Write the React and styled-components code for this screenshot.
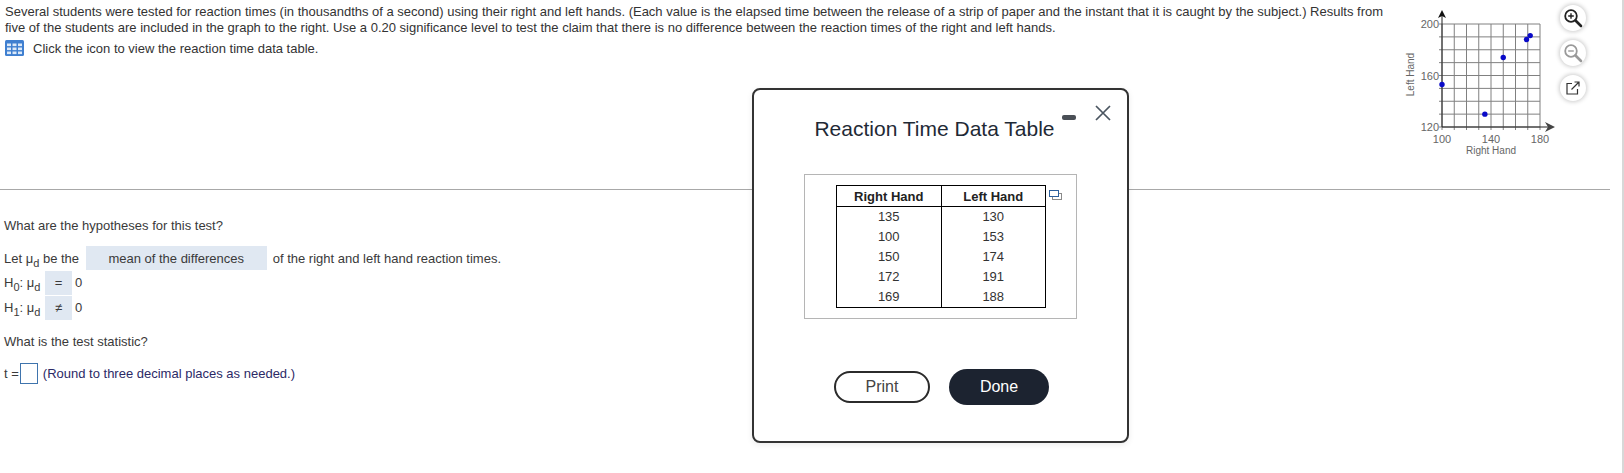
import React from 'react';
import styled, { createGlobalStyle } from 'styled-components';

const GlobalStyle = createGlobalStyle`
  html, body { margin: 0; padding: 0; background: #fff; }
  body { font-family: "Liberation Sans", Arial, sans-serif; color: #333; overflow: hidden; }
`;

const Page = styled.div`
  position: relative;
  width: 1622px;
  height: 473px;
  border-right: 2px solid #d8d8d8;
  font-size: 13px;
`;

const TopSection = styled.section`
  display: flex;
  width: 1610px;
  height: 190px;
  box-sizing: border-box;
  border-bottom: 1px solid #a8a8a8;
`;

const Intro = styled.div`
  width: 1395px;
  padding: 4px 0 0 5px;
  box-sizing: border-box;
  flex: none;
`;

const IntroText = styled.p`
  margin: 0;
  line-height: 16px;
  color: #333;
`;

const DataLink = styled.div`
  display: flex;
  align-items: center;
  gap: 9px;
  margin-top: 3px;
  height: 18px;
`;

const GraphWrap = styled.div`
  width: 160px;
  flex: none;
`;

const Tools = styled.div`
  display: flex;
  flex-direction: column;
  gap: 9px;
  padding-top: 5px;
  margin-left: 5px;
`;

const ToolButton = styled.button`
  width: 26px;
  height: 26px;
  padding: 0;
  border: none;
  border-radius: 50%;
  background: #fff;
  box-shadow: 0 0 4px 1px #ccc;
  display: flex;
  align-items: center;
  justify-content: center;
`;

const Lower = styled.section`
  padding: 27px 0 0 4px;
  color: #3a3a3a;
`;

const Line = styled.div`
  display: flex;
  align-items: center;
  height: ${p => p.$h || 25}px;
  margin-top: ${p => p.$mt || 0}px;
  white-space: pre;
`;

const Sub = styled.sub`
  font-size: 11px;
  line-height: 0;
  vertical-align: -4px;
`;

const Choice = styled.span`
  display: flex;
  align-items: center;
  justify-content: center;
  box-sizing: border-box;
  background: #e0e8f2;
  height: 24px;
  width: ${p => p.$w}px;
  margin: 0 ${p => p.$mr ?? 6}px 0 ${p => p.$ml || 0}px;
`;

const AnswerBox = styled.span`
  display: inline-block;
  box-sizing: border-box;
  width: 18px;
  height: 21px;
  margin: 0 5px 0 1px;
  border: 1px solid #3f74ad;
  background: #fff;
`;

const Note = styled.span`
  color: #2c2a66;
`;

const Modal = styled.div`
  position: absolute;
  left: 752px;
  top: 88px;
  width: 377px;
  height: 355px;
  box-sizing: border-box;
  border: 2.5px solid #333;
  border-radius: 8px;
  background: #fff;
  box-shadow: 0 2px 6px rgba(0, 0, 0, 0.08);
  display: flex;
  flex-direction: column;
  align-items: center;
`;

const ModalHead = styled.div`
  position: relative;
  width: 100%;
  height: 84px;
  flex: none;
`;

const Title = styled.h2`
  margin: 0;
  padding-top: 26px;
  padding-right: 12px;
  text-align: center;
  font-size: 21px;
  line-height: 26px;
  font-weight: 400;
  color: #1f2a36;
`;

const Minimize = styled.span`
  position: absolute;
  left: 308px;
  top: 25px;
  width: 14px;
  height: 5px;
  border-radius: 2px;
  background: #4a4f56;
`;

const Close = styled.svg`
  position: absolute;
  left: 341px;
  top: 15px;
`;

const TableFrame = styled.div`
  position: relative;
  width: 273px;
  height: 145px;
  box-sizing: border-box;
  border: 1px solid #b5b5b5;
  padding: 10px 0 0 31px;
  flex: none;
`;

const DataTable = styled.table`
  border-collapse: collapse;
  width: 210px;
  font-size: 13px;
  text-align: center;
  border: 1.5px solid #000;
  table-layout: fixed;
`;

const Head = styled.th`
  height: 20px;
  padding: 0;
  font-weight: 700;
  color: #222;
  border: 1px solid #000;
`;

const Cell = styled.td`
  height: 18px;
  padding: 0 0 2px;
  color: #333;
  border-left: 1px solid #000;
`;

const CopyIcon = styled.svg`
  position: absolute;
  left: 244px;
  top: 15px;
`;

const Buttons = styled.div`
  display: flex;
  align-items: center;
  gap: 19px;
  margin-top: 50px;
  padding-left: 2px;
`;

const PrintButton = styled.button`
  width: 96px;
  height: 32px;
  box-sizing: border-box;
  border: 2px solid #2b2b2b;
  border-radius: 16px;
  background: #fff;
  color: #444;
  font: 16px "Liberation Sans", Arial, sans-serif;
`;

const DoneButton = styled.button`
  width: 100px;
  height: 36px;
  border: none;
  border-radius: 18px;
  background: #1c2330;
  color: #fff;
  font: 16px "Liberation Sans", Arial, sans-serif;
`;

const rows = [[135, 130], [100, 153], [150, 174], [172, 191], [169, 188]];

const X0 = 47, Y0 = 127, XS = 98 / 80, YS = 103 / 80;
const px = v => X0 + (v - 100) * XS;
const py = v => Y0 - (v - 120) * YS;
const steps = Array.from({ length: 9 }, (_, i) => i * 10);

function Graph() {
  const label = { fontFamily: '"Liberation Sans", Arial, sans-serif', fill: '#666' };
  return (
    <svg width="160" height="170" viewBox="0 0 160 170" style={{ display: 'block' }}>
      {steps.map(s => (
        <g key={s} stroke="#808080" strokeWidth="1">
          <line x1={px(100 + s)} x2={px(100 + s)} y1={py(200)} y2={py(120) + 3} />
          <line x1={px(100) - 3} x2={px(180)} y1={py(120 + s)} y2={py(120 + s)} />
        </g>
      ))}
      <line x1={X0} x2={X0} y1="14" y2={Y0} stroke="#222" strokeWidth="1" />
      <line x1={X0} x2="155" y1={Y0} y2={Y0} stroke="#222" strokeWidth="1" />
      <path d="M47 10 L51 18 L47 16 L43 18 Z" fill="#111" />
      <path d="M160 127 L150 122 L153 127 L150 132 Z" fill="#444" />
      <g fontSize="11" {...label}>
        <text x={X0 - 3} y={py(200) + 4} textAnchor="end">200</text>
        <text x={X0 - 3} y={py(160) + 4} textAnchor="end">160</text>
        <text x={X0 - 3} y={py(120) + 4} textAnchor="end">120</text>
        <text x={px(100)} y="143" textAnchor="middle">100</text>
        <text x={px(140)} y="143" textAnchor="middle">140</text>
        <text x={px(180)} y="143" textAnchor="middle">180</text>
      </g>
      <g fontSize="10" {...label}>
        <text x={px(140)} y="154" textAnchor="middle">Right Hand</text>
        <text transform={`translate(13 ${py(160) - 1}) rotate(-90)`} y="6" textAnchor="middle">Left Hand</text>
      </g>
      {rows.map(([r, l]) => <circle key={r} cx={px(r)} cy={py(l)} r="2.7" fill="#0a0ac8" />)}
    </svg>
  );
}

const Magnifier = ({ color, plus }) => (
  <svg width="20" height="20" viewBox="0 0 20 20" fill="none" stroke={color}>
    <circle cx="8" cy="8" r="5.8" strokeWidth="1.8" />
    <path d="M12.5 12.5 L18 18" strokeWidth="2.6" strokeLinecap="round" />
    <path d={plus ? 'M5.2 8 H10.8 M8 5.2 V10.8' : 'M5.2 8 H10.8'} strokeWidth="1.4" />
  </svg>
);

export default function App() {
  return (
    <>
      <GlobalStyle />
      <Page>
        <TopSection>
          <Intro>
            <IntroText>
              Several students were tested for reaction times (in thousandths of a second) using their right and left hands. (Each value is the elapsed time between the release of a strip of paper and the instant that it is caught by the subject.) Results from
              <br />
              five of the students are included in the graph to the right. Use a 0.20 significance level to test the claim that there is no difference between the reaction times of the right and left hands.
            </IntroText>
            <DataLink>
              <svg width="19" height="16" viewBox="0 0 19 16">
                <rect width="19" height="16" rx="1.5" fill="#3f7fd0" />
                {[2, 7.5, 13].map(x => [3.5, 7.5, 11.5].map(y => (
                  <rect key={`${x}-${y}`} x={x} y={y} width="4" height="2.6" fill="#dce9f8" />
                )))}
              </svg>
              <span>Click the icon to view the reaction time data table.</span>
            </DataLink>
          </Intro>
          <GraphWrap><Graph /></GraphWrap>
          <Tools>
            <ToolButton><Magnifier color="#222" plus /></ToolButton>
            <ToolButton><Magnifier color="#999" /></ToolButton>
            <ToolButton>
              <svg width="16" height="16" viewBox="0 0 16 16" fill="none" stroke="#333" strokeWidth="1.2">
                <path d="M7 3.5 H2 V14 H12.5 V9" />
                <path d="M6.5 9.5 L13.5 2.5 M9.5 2 H14 V6.5" />
              </svg>
            </ToolButton>
          </Tools>
        </TopSection>

        <Lower>
          <Line $h={16}>What are the hypotheses for this test?</Line>
          <Line $h={24} $mt={13}>
            <span>Let μ<Sub>d</Sub> be the </span><Choice $w={181} $ml={3}>mean of the differences</Choice>of the right and left hand reaction times.
          </Line>
          <Line>
            <span>H<Sub>0</Sub>: μ<Sub>d</Sub> </span><Choice $w={27} $ml={1} $mr={3}>=</Choice>0
          </Line>
          <Line>
            <span>H<Sub>1</Sub>: μ<Sub>d</Sub> </span><Choice $w={27} $ml={1} $mr={3}>≠</Choice>0
          </Line>
          <Line $h={16} $mt={13}>What is the test statistic?</Line>
          <Line $h={21} $mt={14}>
            t =<AnswerBox /><Note>(Round to three decimal places as needed.)</Note>
          </Line>
        </Lower>

        <Modal>
          <ModalHead>
            <Title>Reaction Time Data Table</Title>
            <Minimize />
            <Close width="16" height="16" viewBox="0 0 16 16" stroke="#4a5560" strokeWidth="1.7">
              <path d="M1 1 L15 15 M15 1 L1 15" />
            </Close>
          </ModalHead>
          <TableFrame>
            <DataTable>
              <thead>
                <tr><Head>Right Hand</Head><Head>Left Hand</Head></tr>
              </thead>
              <tbody>
                {rows.map(([r, l]) => (
                  <tr key={r}><Cell>{r}</Cell><Cell>{l}</Cell></tr>
                ))}
              </tbody>
            </DataTable>
            <CopyIcon width="13" height="10" viewBox="0 0 13 10" fill="none" strokeWidth="1">
              <rect x="3.5" y="3.5" width="9" height="6" stroke="#8a8a8a" />
              <rect x="0.5" y="0.5" width="9" height="6" fill="#fff" stroke="#2c5f9c" />
            </CopyIcon>
          </TableFrame>
          <Buttons>
            <PrintButton>Print</PrintButton>
            <DoneButton>Done</DoneButton>
          </Buttons>
        </Modal>
      </Page>
    </>
  );
}
